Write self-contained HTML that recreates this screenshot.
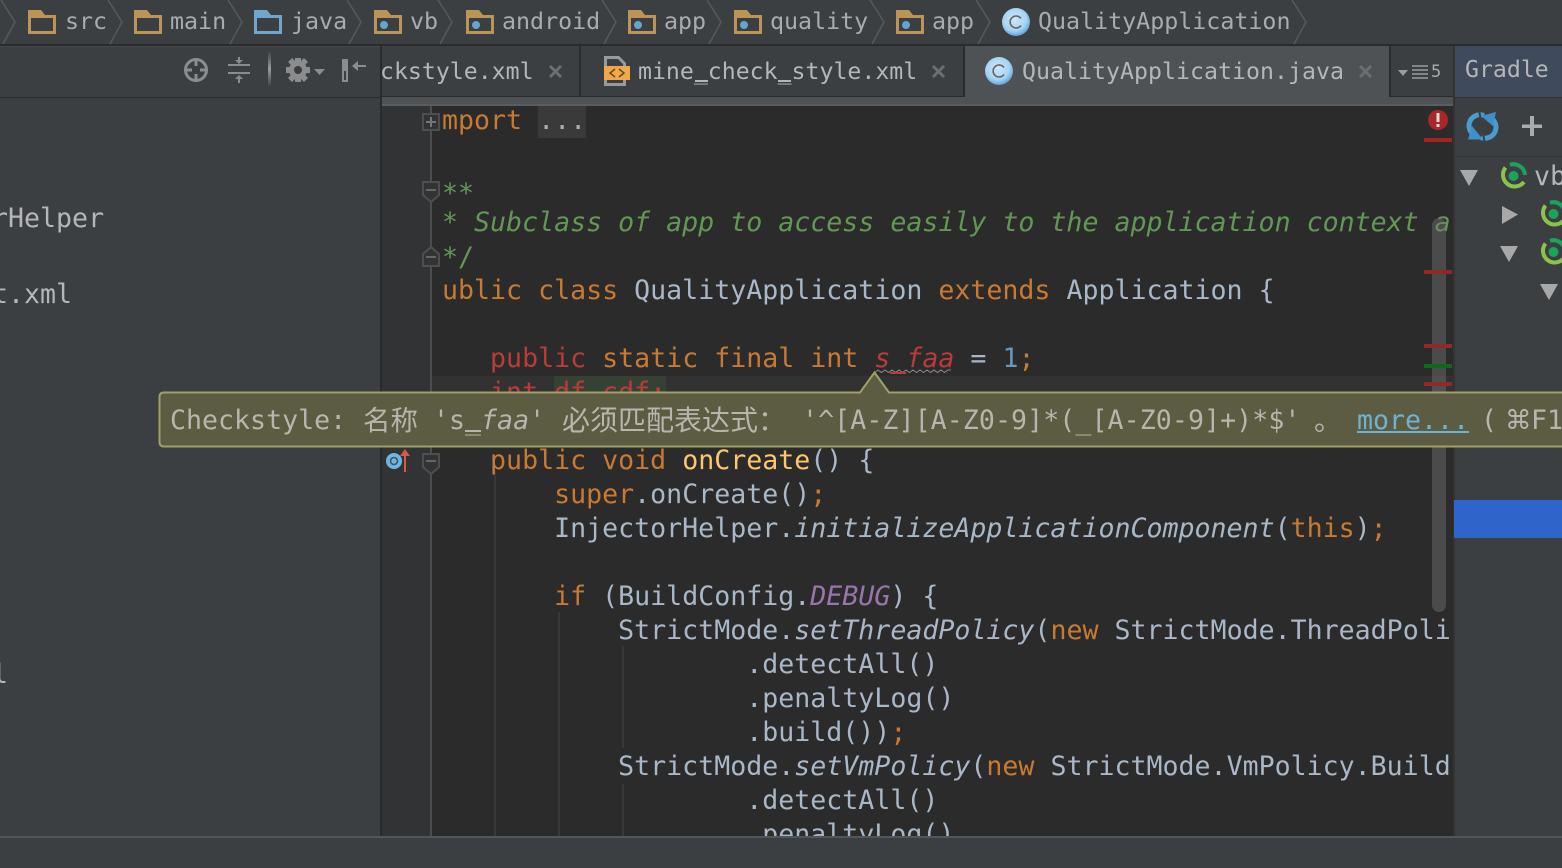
<!DOCTYPE html>
<html><head><meta charset="utf-8"><style>
html,body{margin:0;padding:0;background:#3c3f41}
#r{position:relative;width:1562px;height:868px;overflow:hidden;background:#3c3f41;font-family:"DejaVu Sans Mono","Liberation Mono","Noto Sans CJK SC",monospace}
.a{position:absolute}
.t{position:absolute;white-space:pre;line-height:34px}
.bc{font-size:23.3px;color:#a9acae;top:5px}
.tb{font-size:23.2px;color:#b4b6b8;top:55px}
.lp{font-size:26.6px;color:#b4b6b8}
#code{position:absolute;left:442px;top:104px;width:1009px;height:732px;overflow:hidden;font-size:26.6px;color:#a9b7c6}
#code div{position:absolute;left:-16px;white-space:pre;line-height:34px;height:34px}
.k{color:#c87a32}.c{color:#629755;font-style:italic}.cn{color:#629755;position:relative}.r{color:#bb3a3a}.n{color:#6897bb}.m{color:#ffc66d}.i{font-style:italic}.p{color:#9876aa;font-style:italic}
.tt{position:absolute;white-space:pre;font-size:26.6px;line-height:34px;top:404px;color:#b6b6ae}
</style></head><body><div id="r">

<div class="a" style="left:0;top:44px;width:1562px;height:2px;background:#2b2b2b"></div>
<div class="t bc" style="left:65px">src</div>
<div class="t bc" style="left:170px">main</div>
<div class="t bc" style="left:291px">java</div>
<div class="t bc" style="left:410px">vb</div>
<div class="t bc" style="left:502px">android</div>
<div class="t bc" style="left:664px">app</div>
<div class="t bc" style="left:770px">quality</div>
<div class="t bc" style="left:932px">app</div>
<div class="t bc" style="left:1038px">QualityApplication</div>

<div class="a" style="left:0;top:46px;width:380px;height:51px;background:#3c3f41;border-top:1px solid #46494b;box-sizing:border-box"></div>
<div class="a" style="left:0;top:97px;width:382px;height:1px;background:#2b2b2b"></div>
<div class="a" style="left:380px;top:46px;width:2px;height:790px;background:#2b2b2b"></div>
<div class="t lp" style="left:-8px;top:202px">rHelper</div>
<div class="t lp" style="left:-8px;top:278px">t.xml</div>
<div class="t lp" style="left:-8px;top:658px">l</div>

<div class="a" style="left:382px;top:46px;width:1072px;height:51px;background:#3c3f41"></div>
<div class="a" style="left:964px;top:46px;width:425px;height:51px;background:#4e5254"></div>
<div class="a" style="left:579px;top:46px;width:2px;height:51px;background:#2b2b2b"></div>
<div class="a" style="left:963px;top:46px;width:2px;height:51px;background:#2b2b2b"></div>
<div class="a" style="left:1389px;top:46px;width:2px;height:51px;background:#2b2b2b"></div>
<div class="a" style="left:382px;top:96px;width:582px;height:2px;background:#2b2b2b"></div>
<div class="a" style="left:1389px;top:96px;width:65px;height:2px;background:#2b2b2b"></div>
<div class="a" style="left:382px;top:97px;width:1071px;height:7px;background:#4e5254"></div>
<div class="a" style="left:382px;top:104px;width:1071px;height:2px;background:#5a5e60"></div>
<div class="t tb" style="left:380px">ckstyle.xml</div>
<div class="t tb" style="left:638px">mine_check_style.xml</div>
<div class="a" style="left:695px;top:80px;width:13px;height:2px;background:#b4b6b8"></div>
<div class="a" style="left:778px;top:80px;width:13px;height:2px;background:#b4b6b8"></div>
<div class="t tb" style="left:1022px;letter-spacing:.04px">QualityApplication.java</div>
<div class="t" style="left:1431px;top:55px;font-size:17px;color:#a9acae">5</div>

<div class="a" style="left:382px;top:106px;width:1071px;height:730px;background:#2b2b2b"></div>
<div class="a" style="left:382px;top:106px;width:49px;height:730px;background:#313335"></div>
<div class="a" style="left:430px;top:106px;width:2px;height:730px;background:#4d4d4d"></div>
<div class="a" style="left:432px;top:376px;width:1021px;height:34px;background:#323232"></div>
<div class="a" style="left:554px;top:376px;width:112px;height:34px;background:#344134"></div>
<div class="a" style="left:538px;top:106px;width:48px;height:32px;background:#3a3a3a"></div>
<div class="a" style="left:494px;top:470px;width:2px;height:366px;background:#383838"></div>
<div class="a" style="left:558px;top:612px;width:2px;height:224px;background:#383838"></div>
<div class="a" style="left:622px;top:646px;width:2px;height:102px;background:#383838"></div>
<div class="a" style="left:622px;top:784px;width:2px;height:52px;background:#383838"></div>

<div id="code">
<div style="top:0"><span class="k">import</span> <span style="color:#aaa">...</span></div>
<div style="top:68px"><span class="cn" style="top:5px">/**</span></div>
<div style="top:102px"><span class="c"> * Subclass of app to access easily to the application context a</span></div>
<div style="top:136px"><span class="cn" style="top:1px"> */</span></div>
<div style="top:170px"><span class="k">public class</span> QualityApplication <span class="k">extends</span> Application {</div>
<div style="top:238px">    <span class="r">public</span> <span class="k">static final int</span> <span class="r i">s_faa</span> = <span class="n">1</span><span class="k">;</span></div>
<div style="top:272px">    <span class="r">int df cdf;</span></div>
<div style="top:340px">    <span class="k">public void</span> <span class="m">onCreate</span>() {</div>
<div style="top:374px">        <span class="k">super</span>.onCreate()<span class="k">;</span></div>
<div style="top:408px">        InjectorHelper.<span class="i">initializeApplicationComponent</span>(<span class="k">this</span>)<span class="k">;</span></div>
<div style="top:476px">        <span class="k">if</span> (BuildConfig.<span class="p">DEBUG</span>) {</div>
<div style="top:510px">            StrictMode.<span class="i">setThreadPolicy</span>(<span class="k">new</span> StrictMode.ThreadPolicy.Builder()</div>
<div style="top:544px">                    .detectAll()</div>
<div style="top:578px">                    .penaltyLog()</div>
<div style="top:612px">                    .build())<span class="k">;</span></div>
<div style="top:646px">            StrictMode.<span class="i">setVmPolicy</span>(<span class="k">new</span> StrictMode.VmPolicy.Builder()</div>
<div style="top:680px">                    .detectAll()</div>
<div style="top:714px">                    .penaltyLog()</div>
</div>

<div class="a" style="left:1432px;top:218px;width:14px;height:394px;background:rgba(120,120,120,.42);border-radius:7px"></div>
<div class="a" style="left:1424px;top:270px;width:28px;height:4px;background:#8e2a2a"></div>
<div class="a" style="left:1424px;top:344px;width:28px;height:4px;background:#8e2a2a"></div>
<div class="a" style="left:1424px;top:364px;width:28px;height:4px;background:#0f6a18"></div>
<div class="a" style="left:1424px;top:382px;width:28px;height:4px;background:#8e2a2a"></div>
<div class="a" style="left:1424px;top:138px;width:28px;height:4px;background:#a32424"></div>

<div class="a" style="left:1453px;top:46px;width:109px;height:790px;background:#3c3f41"></div>
<div class="a" style="left:1453px;top:46px;width:2px;height:790px;background:#333"></div>
<div class="a" style="left:1455px;top:46px;width:107px;height:51px;background:#3f4b5d"></div>
<div class="a" style="left:1455px;top:97px;width:107px;height:1px;background:#2f3133"></div>
<div class="a" style="left:1455px;top:156px;width:107px;height:1px;background:#333537"></div>
<div class="a" style="left:1454px;top:500px;width:108px;height:38px;background:#2f65ca"></div>
<div class="t tb" style="left:1465px;top:53px">Gradle</div>
<div class="t" style="left:1534px;top:160px;font-size:26.6px;color:#b4b6b8">vb</div>

<svg class="a" style="left:0;top:0" width="1562" height="868" viewBox="0 0 1562 868">
<defs>
<radialGradient id="cg" cx="45%" cy="40%" r="60%"><stop offset="0" stop-color="#cfe6f7"/><stop offset=".7" stop-color="#a6d3f2"/><stop offset="1" stop-color="#5aa7de"/></radialGradient>
<linearGradient id="sp" x1="0" y1="0" x2="0" y2="1"><stop offset="0" stop-color="#8a8c8e" stop-opacity=".1"/><stop offset=".5" stop-color="#9a9c9e"/><stop offset="1" stop-color="#8a8c8e" stop-opacity=".1"/></linearGradient>
<path id="f" fill-rule="evenodd" d="M0 0H13L17 5H28V24H0ZM3 8V21H25V8Z"/>
<g id="ch"><path d="M-14 0L0 22L-12 44" fill="none" stroke="#55585a" stroke-width="1.6"/></g>
</defs>
<use href="#ch" x="15"/><use href="#ch" x="122"/><use href="#ch" x="242"/><use href="#ch" x="361"/><use href="#ch" x="452"/><use href="#ch" x="616"/><use href="#ch" x="721"/><use href="#ch" x="884"/><use href="#ch" x="990"/><use href="#ch" x="1306"/>
<g fill="#bb9558"><use href="#f" x="28" y="10"/><use href="#f" x="134" y="10"/><use href="#f" x="374" y="10"/><use href="#f" x="466" y="10"/><use href="#f" x="628" y="10"/><use href="#f" x="734" y="10"/><use href="#f" x="896" y="10"/></g>
<use href="#f" x="254" y="10" fill="#6ea6cc"/>
<g fill="#62a5cf"><circle cx="384" cy="25" r="4"/><circle cx="476" cy="25" r="4"/><circle cx="638" cy="25" r="4"/><circle cx="744" cy="25" r="4"/><circle cx="906" cy="25" r="4"/></g>

<circle cx="1016" cy="22" r="14" fill="url(#cg)"/>
<path d="M1021 18.500A6 6 0 1 0 1021 25.500" fill="none" stroke="#666" stroke-width="1.600"/>
<circle cx="999" cy="71" r="14" fill="url(#cg)"/>
<path d="M1004 67.500A6 6 0 1 0 1004 74.500" fill="none" stroke="#666" stroke-width="1.600"/>

<g fill="none" stroke="#8a8c8e">
<circle cx="196" cy="70" r="10.500" stroke-width="3"/>
<path d="M196 58V66M196 74V82M184 70H192M200 70H208" stroke-width="3"/>
<path d="M228 65H250M228 73H250" stroke-width="2"/>
<path d="M239 57V61M239 78V83" stroke-width="2"/>
</g>
<path d="M235 60H243L239 64ZM235 79H243L239 75Z" fill="#8a8c8e"/>
<rect x="268" y="52" width="3" height="34" fill="url(#sp)"/>
<g fill="#8a8c8e"><circle cx="298" cy="70" r="9"/>
<path d="M295 58H301V63H295ZM295 77H301V82H295ZM286 67H291V73H286ZM305 67H310V73H305Z"/>
<path d="M288 62L292 58L296 62L292 66ZM304 58L308 62L304 66L300 62ZM288 78L292 74L296 78L292 82ZM304 74L308 78L304 82L300 78Z"/>
<path d="M314 69H325L319.500 75Z"/></g>
<circle cx="298" cy="70" r="4" fill="#3c3f41"/>
<rect x="343" y="60" width="4" height="21" fill="none" stroke="#8a8c8e" stroke-width="2"/>
<rect x="342" y="59" width="6" height="12" fill="#8a8c8e"/>
<path d="M356 66H366" stroke="#8a8c8e" stroke-width="2"/>
<path d="M352 66L358 61V71Z" fill="#8a8c8e"/>

<path d="M550 66L561 77M561 66L550 77M933 66L944 77M944 66L933 77M1360 66L1371 77M1371 66L1360 77" stroke="#6c6e70" stroke-width="3"/>

<path d="M604 56H619L626 63V86H604Z" fill="#9a9a9a"/>
<path d="M607 59H618L623 64V83H607Z" fill="#3c3f41"/>
<rect x="604" y="66" width="26" height="14" fill="#f0a848"/>
<path d="M615 69L610 73L615 77M619 69L624 73L619 77" fill="none" stroke="#5d4a2c" stroke-width="1.500"/>

<path d="M1398 70H1408L1403 76Z" fill="#9a9c9e"/>
<path d="M1412 66H1428M1412 70H1428M1412 74H1428M1412 78H1428" stroke="#9a9c9e" stroke-width="1.500"/>

<path d="M1484 115.500A11 11 0 0 0 1476 136" fill="none" stroke="#4a9bd0" stroke-width="5"/>
<path d="M1468 139.500H1483L1472 126Z" fill="#3f8fc8"/>
<path d="M1481 137.500A11 11 0 0 0 1489 117" fill="none" stroke="#4a9bd0" stroke-width="5"/>
<path d="M1481 116L1496 112L1493 126Z" fill="#3f8fc8"/>
<path d="M1479 110L1484.500 142" stroke="#3c3f41" stroke-width="2"/>
<path d="M1522 124.500H1542V128H1522ZM1530 116H1534V136H1530Z" fill="#a9abad"/>

<circle cx="1438" cy="120" r="10" fill="#a82828"/>
<path d="M1436.500 113H1439.500V122H1436.500ZM1436.500 124H1439.500V127H1436.500Z" fill="#e8d8d8"/>

<path d="M1460 170H1478L1469 186Z" fill="#a8a8a8"/>
<path d="M1502 206L1518 214.500L1502 224Z" fill="#a8a8a8"/>
<path d="M1500 246H1518L1509 262Z" fill="#a8a8a8"/>
<path d="M1540 284H1558L1549 300Z" fill="#a8a8a8"/>
<g fill="none" stroke-width="4">
<path d="M1510 164.800A11.500 11.500 0 0 1 1525 175" stroke="#1ba25c"/>
<path d="M1505.500 167.500A11.500 11.500 0 1 0 1524 182" stroke="#8bc34a"/>
</g>
<circle cx="1513.500" cy="176" r="5" fill="#1ba25c"/>
<g fill="none" stroke-width="4" transform="translate(40 38)">
<path d="M1510 164.800A11.500 11.500 0 0 1 1525 175" stroke="#1ba25c"/>
<path d="M1505.500 167.500A11.500 11.500 0 1 0 1524 182" stroke="#8bc34a"/>
</g>
<circle cx="1553.500" cy="214" r="5" fill="#1ba25c"/>
<g fill="none" stroke-width="4" transform="translate(40 76)">
<path d="M1510 164.800A11.500 11.500 0 0 1 1525 175" stroke="#1ba25c"/>
<path d="M1505.500 167.500A11.500 11.500 0 1 0 1524 182" stroke="#8bc34a"/>
</g>
<circle cx="1553.500" cy="252" r="5" fill="#1ba25c"/>

<g fill="#313335" stroke="#4f4f4f" stroke-width="2">
<rect x="423" y="114" width="16" height="16"/>
<path d="M423 182H439V195L431 202L423 195Z"/>
<path d="M423 266H439V254L431 247L423 254Z"/>
<path d="M423 454H439V467L431 474L423 467Z"/>
</g>
<path d="M426 122H436M431 117V127" stroke="#777" stroke-width="2"/>
<path d="M426 190H436M426 257H436M426 461H436" stroke="#666" stroke-width="2"/>

<circle cx="394" cy="461" r="8" fill="#6fb6e4"/>
<circle cx="394" cy="461" r="3.500" fill="none" stroke="#44525c" stroke-width="1.600"/>
<path d="M405 456V472" stroke="#d9584b" stroke-width="2"/>
<path d="M400 456L405 449L410 456Z" fill="#d9584b"/>

<path d="M875 372.500l3-2.500l3.500 2.500l3.500-2.500l3.500 2.500l3.500-2.500l3.500 2.500l3.500-2.500l3.500 2.500l3.500-2.500l3.500 2.500l3.500-2.500l3.500 2.500l3.500-2.500l3.500 2.500l3.500-2.500l3.500 2.500l3.500-2.500l3.500 2.500l3.500-2.500l3.500 2.500l3.500-2.500l3-0" fill="none" stroke="#8a8a8a" stroke-width="1"/>
<rect x="890" y="372" width="16" height="2" fill="#bb3a3a"/>

<path d="M1564 392.500H889L874.500 372.500L860 392.500H164Q159.500 392.500 159.500 397V442Q159.500 446.500 164 446.500H1564Z" fill="#5c5c42" stroke="#a0a068" stroke-width="2"/>
</svg>

<div class="tt" style="left:170px">Checkstyle:</div>
<div class="tt" style="left:363px;font-size:27.500px">名称</div>
<div class="tt" style="left:433px">'s_<i>faa</i>'</div>
<div class="a" style="left:465px;top:430px;width:16px;height:2px;background:#b6b6ae"></div>
<div class="tt" style="left:562px;font-size:28px">必须匹配表达式：</div>
<div class="tt" style="left:802px;letter-spacing:.07px">'^[A-Z][A-Z0-9]*(_[A-Z0-9]+)*$'</div>
<div class="tt" style="left:1314px;font-size:28px">。</div>
<div class="tt" style="left:1357px;color:#6fb3d2;text-decoration:underline">more...</div>
<div class="tt" style="left:1481px">(</div>
<div class="tt" style="left:1505px;font-family:'DejaVu Sans',sans-serif">⌘</div>
<div class="tt" style="left:1531px">F1</div>

<div class="a" style="left:0;top:836px;width:1562px;height:32px;background:#3c3f41;border-top:2px solid #515658;box-sizing:border-box"></div>
</div></body></html>
